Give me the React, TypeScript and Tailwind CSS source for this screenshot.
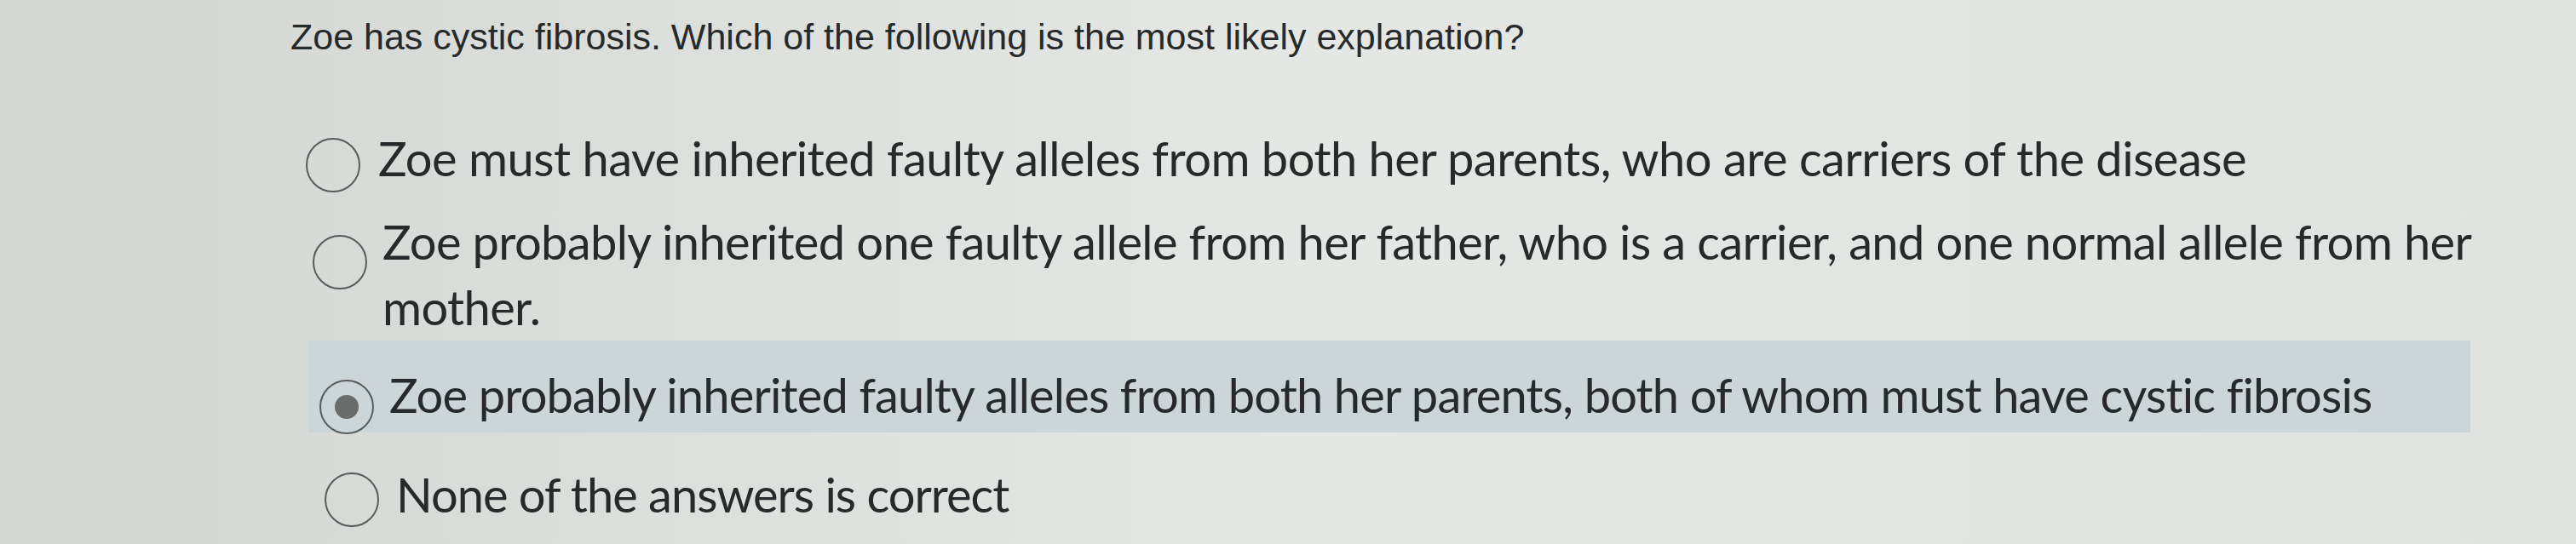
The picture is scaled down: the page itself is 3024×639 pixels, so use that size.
function Radio({ checked }: { checked?: boolean }) {
  return (
    <span className="flex h-[64px] w-[64px] shrink-0 items-center justify-center rounded-full border-[2.5px] border-[#5a5c5c]">
      {checked && <span className="h-[28px] w-[28px] rounded-full bg-[#6a6c6c]" />}
    </span>
  )
}

export default function App() {
  return (
    <div className="h-[639px] w-[3024px] overflow-hidden bg-gradient-to-r from-[#d4d6d4] via-[#e5e7e5] to-[#e1e3e1] text-[#272a2b]">
      <h1 className="ml-[341px] pt-[22px] font-['Liberation_Sans',Arial,sans-serif] text-[43px] leading-none">
        Zoe has cystic fibrosis. Which of the following is the most likely explanation?
      </h1>

      <div className="mt-[86px] flex flex-col whitespace-nowrap font-['Lato','Noto_Sans',sans-serif] text-[56px]">
        <label className="ml-[359px] flex items-start gap-[21px] tracking-[-0.5px]">
          <span className="mt-[11px]">
            <Radio />
          </span>
          <span className="leading-[70px]">
            Zoe must have inherited faulty alleles from both her parents, who are carriers of the disease
          </span>
        </label>

        <label className="ml-[367px] mt-[19px] flex items-start gap-[18px] tracking-[-0.62px]">
          <span className="mt-[31px]">
            <Radio />
          </span>
          <span className="leading-[77px]">
            Zoe probably inherited one faulty allele from her father, who is a carrier, and one normal allele from her
            <br />
            mother.
          </span>
        </label>

        <label className="ml-[362px] mt-[1px] flex h-[108px] w-[2538px] items-start gap-[18px] bg-[#ccd5d8] pl-[13px] pt-[29px] tracking-[-0.83px]">
          <span className="mt-[17px]">
            <Radio checked />
          </span>
          <span className="leading-[70px]">
            Zoe probably inherited faulty alleles from both her parents, both of whom must have cystic fibrosis
          </span>
        </label>

        <label className="ml-[381px] mt-[38px] flex items-start gap-[20px] tracking-[-1px]">
          <span className="mt-[9px]">
            <Radio />
          </span>
          <span className="leading-[70px]">None of the answers is correct</span>
        </label>
      </div>
    </div>
  )
}
